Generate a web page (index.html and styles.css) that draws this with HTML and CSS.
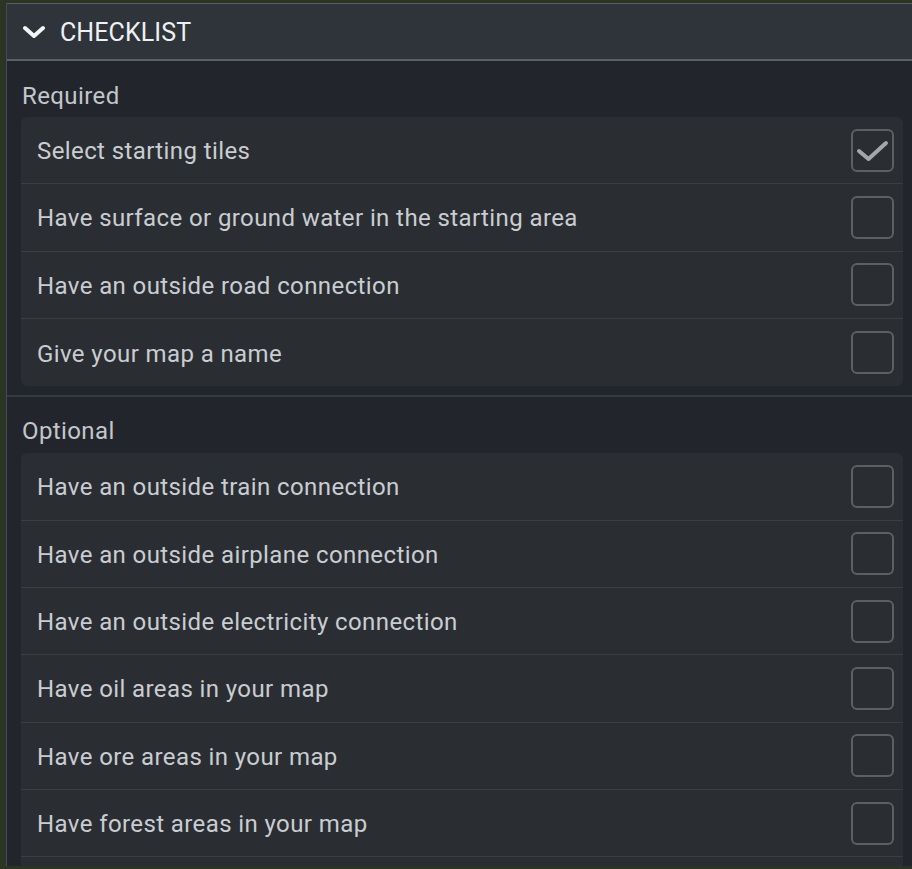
FILE: index.html
```html
<!DOCTYPE html>
<html>
<head>
<meta charset="utf-8">
<link rel="stylesheet" href="styles.css">
</head>
<body>
<div class="panel">
  <div class="header">
    <svg class="chev" width="22" height="14" viewBox="0 0 22 14"><path d="M2 3 L11 11 L20 3" fill="none" stroke="#f2f4f5" stroke-width="4" stroke-linecap="round" stroke-linejoin="round"/></svg>
    <span class="title">CHECKLIST</span>
  </div>
  <div class="section">
    <div class="label">Required</div>
    <div class="list">
      <div class="row"><span>Select starting tiles</span><span class="box checked"><svg width="39" height="39" viewBox="0 0 39 39"><path d="M6 20 L15.5 28 L33 12" fill="none" stroke="#a3a7ab" stroke-width="4" stroke-linecap="round" stroke-linejoin="round"/></svg></span></div>
      <div class="row"><span>Have surface or ground water in the starting area</span><span class="box"></span></div>
      <div class="row"><span>Have an outside road connection</span><span class="box"></span></div>
      <div class="row"><span>Give your map a name</span><span class="box"></span></div>
    </div>
  </div>
  <div class="section sep">
    <div class="label">Optional</div>
    <div class="list">
      <div class="row"><span>Have an outside train connection</span><span class="box"></span></div>
      <div class="row"><span>Have an outside airplane connection</span><span class="box"></span></div>
      <div class="row"><span>Have an outside electricity connection</span><span class="box"></span></div>
      <div class="row"><span>Have oil areas in your map</span><span class="box"></span></div>
      <div class="row"><span>Have ore areas in your map</span><span class="box"></span></div>
      <div class="row"><span>Have forest areas in your map</span><span class="box"></span></div>
      <div class="row"><span></span><span class="box"></span></div>
    </div>
  </div>
</div>
</body>
</html>
```

FILE: styles.css
```css
html, body {
  margin: 0;
  padding: 0;
  background: #2c3423;
  overflow: hidden;
}
body {
  font-family: Roboto, "Noto Sans", sans-serif;
}
.panel {
  margin: 3px 0 0 6px;
  height: 863px;
  overflow: hidden;
  background: #22262c;
  border-left: 1px solid #454b50;
  box-sizing: border-box;
}
.header {
  height: 58px;
  box-sizing: border-box;
  border-top: 1px solid #595f64;
  border-bottom: 2px solid #5a6065;
  background: #2e343a;
  display: flex;
  align-items: center;
  padding-left: 16px;
}
.chev {
  display: block;
  margin-top: 1px;
}
.title {
  margin-left: 15px;
  color: #eef0f2;
  font-size: 25px;
  letter-spacing: 0.1px;
  padding-top: 2px;
}
.section {
  padding: 0 9px 9px 14px;
}
.sep {
  border-top: 2px solid #343a40;
}
.sep .label {
  height: 56px;
  padding-top: 12px;
}
.label {
  height: 56px;
  display: flex;
  align-items: center;
  color: #c3c7cb;
  font-size: 24px;
  letter-spacing: 0.4px;
  padding-left: 1px;
  padding-top: 14px;
  box-sizing: border-box;
}
.list {
  background: #2a2e33;
  border-radius: 6px;
}
.row {
  height: 67.33px;
  box-sizing: border-box;
  display: flex;
  align-items: center;
  justify-content: space-between;
  padding: 0 9px 0 16px;
  border-bottom: 1px solid #3a3f44;
  color: #c9cdd1;
  font-size: 24px;
  letter-spacing: 0.4px;
}
.row:last-child {
  border-bottom: none;
}
.row span:first-child {
  padding-top: 2px;
}
.box {
  width: 43px;
  height: 43px;
  box-sizing: border-box;
  border: 2px solid #5c6064;
  border-radius: 6px;
  background: #2a2d31;
  display: flex;
  align-items: center;
  justify-content: center;
}
.box svg {
  display: block;
}
```
